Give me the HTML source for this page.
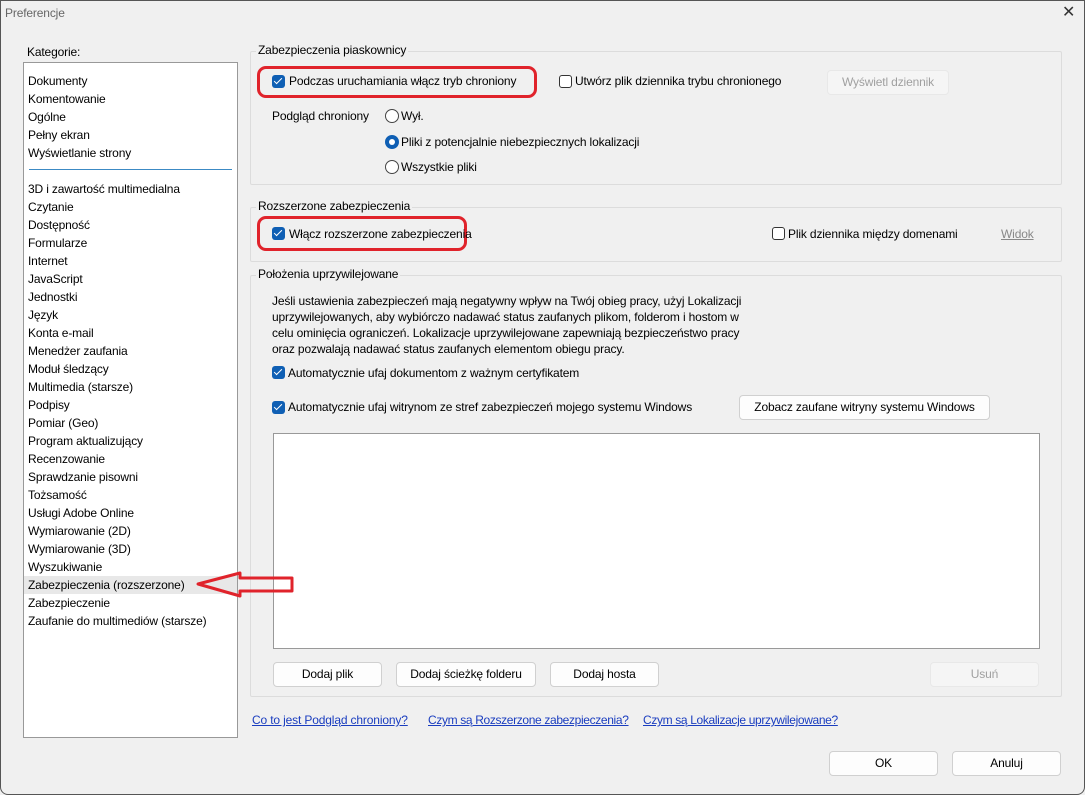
<!DOCTYPE html>
<html><head><meta charset="utf-8"><style>
*{margin:0;padding:0;box-sizing:border-box}
body{width:1085px;height:795px;background:#f0f0f0;font-family:"Liberation Sans",sans-serif;font-size:12px;letter-spacing:-0.15px;color:#000;position:relative;overflow:hidden}
.frame{position:absolute;left:0;top:0;width:1085px;height:795px;border:1px solid #555;border-radius:0 0 8px 8px;pointer-events:none}
.a{position:absolute;white-space:nowrap}
.grp{position:absolute;border:1px solid #dcdcdc;border-radius:2px}
.gt{position:absolute;background:#f0f0f0;padding:0 2px;top:-9px;left:5px}
.btn{position:absolute;background:#fdfdfd;border:1px solid #d0d0d0;border-radius:4px;text-align:center;line-height:22px}
.dis{background:#f5f5f5;color:#a0a0a0;border-color:#e8e8e8}
.cb{position:absolute;width:13px;height:13px;border-radius:3px;background:#0f5fb4}
.cb:after{content:"";position:absolute;left:4px;top:1px;width:3px;height:7px;border:solid #fff;border-width:0 1.5px 1.5px 0;transform:rotate(45deg)}
.ucb{position:absolute;width:13px;height:13px;border-radius:3px;border:1px solid #333;background:#fff}
.rd{position:absolute;width:14px;height:14px;border-radius:50%;border:1px solid #444;background:#fff}
.rs{background:#0f5fb4;border-color:#0f5fb4}
.rs:after{content:"";position:absolute;left:3px;top:3px;width:6px;height:6px;border-radius:50%;background:#fff}
.red{position:absolute;border:3px solid #e0232b;border-radius:9px}
.lnk{position:absolute;color:#1a3dbf;text-decoration:underline;white-space:nowrap}
#list div{height:18px;line-height:18px;padding-left:4px}
</style></head><body>
<div class="a" style="left:5px;top:6px;color:#666">Preferencje</div>
<div class="a" style="left:1062px;top:2px;font-size:16px;color:#333">✕</div>
<div class="a" style="left:27px;top:45px">Kategorie:</div>
<div id="list" style="position:absolute;left:23px;top:62px;width:215px;height:676px;background:#fff;border:1px solid #999;padding-top:9px">
<div>Dokumenty</div><div>Komentowanie</div><div>Ogólne</div><div>Pełny ekran</div><div>Wyświetlanie strony</div>
<div style="height:8px;border-bottom:1px solid #3c8ac4;margin:0 5px 10px 5px;padding:0"></div>
<div>3D i zawartość multimedialna</div><div>Czytanie</div><div>Dostępność</div><div>Formularze</div><div>Internet</div><div>JavaScript</div><div>Jednostki</div><div>Język</div><div>Konta e-mail</div><div>Menedżer zaufania</div><div>Moduł śledzący</div><div>Multimedia (starsze)</div><div>Podpisy</div><div>Pomiar (Geo)</div><div>Program aktualizujący</div><div>Recenzowanie</div><div>Sprawdzanie pisowni</div><div>Tożsamość</div><div>Usługi Adobe Online</div><div>Wymiarowanie (2D)</div><div>Wymiarowanie (3D)</div><div>Wyszukiwanie</div><div style="background:#e8e8e8">Zabezpieczenia (rozszerzone)</div><div>Zabezpieczenie</div><div>Zaufanie do multimediów (starsze)</div>
</div>
<div style="position:absolute;left:194px;top:570px;width:106px;height:30px;z-index:5">
<svg width="106" height="30" viewBox="0 0 106 30" style="display:block"><path d="M4 14 L46 3 L46 8 L98 8 L98 21 L46 21 L46 26 Z" fill="none" stroke="#e0232b" stroke-width="3" stroke-linejoin="round"/></svg></div>

<div class="grp" style="left:250px;top:51px;width:812px;height:134px"><div class="gt">Zabezpieczenia piaskownicy</div></div>
<div class="red" style="left:257px;top:66px;width:280px;height:32px"></div>
<div class="cb" style="left:272px;top:75px"></div>
<div class="a" style="left:289px;top:74px">Podczas uruchamiania włącz tryb chroniony</div>
<div class="ucb" style="left:559px;top:75px"></div>
<div class="a" style="left:575px;top:74px">Utwórz plik dziennika trybu chronionego</div>
<div class="btn dis" style="left:827px;top:70px;width:122px;height:25px">Wyświetl dziennik</div>
<div class="a" style="left:272px;top:109px">Podgląd chroniony</div>
<div class="rd" style="left:385px;top:109px"></div><div class="a" style="left:401px;top:109px">Wył.</div>
<div class="rd rs" style="left:385px;top:135px"></div><div class="a" style="left:401px;top:135px">Pliki z potencjalnie niebezpiecznych lokalizacji</div>
<div class="rd" style="left:385px;top:160px"></div><div class="a" style="left:401px;top:160px">Wszystkie pliki</div>

<div class="grp" style="left:250px;top:207px;width:812px;height:55px"><div class="gt">Rozszerzone zabezpieczenia</div></div>
<div class="red" style="left:257px;top:216px;width:210px;height:35px"></div>
<div class="cb" style="left:272px;top:227px"></div>
<div class="a" style="left:289px;top:227px">Włącz rozszerzone zabezpieczenia</div>
<div class="ucb" style="left:772px;top:227px"></div>
<div class="a" style="left:788px;top:227px">Plik dziennika między domenami</div>
<div class="a" style="left:1001px;top:227px;color:#888;text-decoration:underline">Widok</div>

<div class="grp" style="left:250px;top:275px;width:812px;height:422px"><div class="gt">Położenia uprzywilejowane</div></div>
<div class="a" style="left:272px;top:293px;line-height:16px">Jeśli ustawienia zabezpieczeń mają negatywny wpływ na Twój obieg pracy, użyj Lokalizacji<br>uprzywilejowanych, aby wybiórczo nadawać status zaufanych plikom, folderom i hostom w<br>celu ominięcia ograniczeń. Lokalizacje uprzywilejowane zapewniają bezpieczeństwo pracy<br>oraz pozwalają nadawać status zaufanych elementom obiegu pracy.</div>
<div class="cb" style="left:272px;top:366px"></div>
<div class="a" style="left:288px;top:366px">Automatycznie ufaj dokumentom z ważnym certyfikatem</div>
<div class="cb" style="left:272px;top:401px"></div>
<div class="a" style="left:288px;top:400px">Automatycznie ufaj witrynom ze stref zabezpieczeń mojego systemu Windows</div>
<div class="btn" style="left:739px;top:395px;width:251px;height:25px">Zobacz zaufane witryny systemu Windows</div>
<div style="position:absolute;left:273px;top:433px;width:767px;height:216px;background:#fff;border:1px solid #999"></div>
<div class="btn" style="left:273px;top:662px;width:109px;height:25px">Dodaj plik</div>
<div class="btn" style="left:396px;top:662px;width:140px;height:25px">Dodaj ścieżkę folderu</div>
<div class="btn" style="left:550px;top:662px;width:109px;height:25px">Dodaj hosta</div>
<div class="btn dis" style="left:930px;top:662px;width:109px;height:25px">Usuń</div>

<div class="lnk" style="left:252px;top:713px">Co to jest Podgląd chroniony?</div>
<div class="lnk" style="left:428px;top:713px;letter-spacing:-0.35px">Czym są Rozszerzone zabezpieczenia?</div>
<div class="lnk" style="left:643px;top:713px;letter-spacing:-0.35px">Czym są Lokalizacje uprzywilejowane?</div>
<div class="btn" style="left:829px;top:751px;width:109px;height:25px">OK</div>
<div class="btn" style="left:952px;top:751px;width:109px;height:25px">Anuluj</div>
<div class="frame"></div>
</body></html>
